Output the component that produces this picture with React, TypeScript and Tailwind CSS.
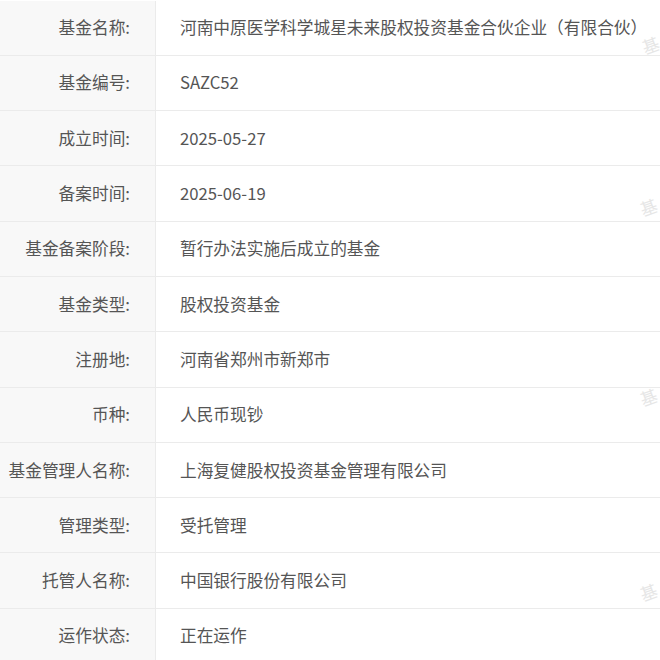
const rows: [string, string][] = [
  ['基金名称:', '河南中原医学科学城星未来股权投资基金合伙企业（有限合伙）'],
  ['基金编号:', 'SAZC52'],
  ['成立时间:', '2025-05-27'],
  ['备案时间:', '2025-06-19'],
  ['基金备案阶段:', '暂行办法实施后成立的基金'],
  ['基金类型:', '股权投资基金'],
  ['注册地:', '河南省郑州市新郑市'],
  ['币种:', '人民币现钞'],
  ['基金管理人名称:', '上海复健股权投资基金管理有限公司'],
  ['管理类型:', '受托管理'],
  ['托管人名称:', '中国银行股份有限公司'],
  ['运作状态:', '正在运作'],
];

const marks = [
  { top: 'top-[36px]', left: 'left-[642px]' },
  { top: 'top-[198px]', left: 'left-[640px]' },
  { top: 'top-[388px]', left: 'left-[640px]' },
  { top: 'top-[583px]', left: 'left-[640px]' },
];

export default function App() {
  return (
    <div className="relative w-[660px] h-[660px] overflow-hidden bg-white font-['Noto_Sans_CJK_SC','Microsoft_YaHei',sans-serif] text-[16.7px] text-[#555]">
      <div className="flex flex-col pt-[0.5px]">
        {rows.map(([label, value]) => (
          <div key={label} className="flex h-[55.3px] shrink-0 border-b border-[#ebebeb]">
            <div className="w-[156px] shrink-0 bg-[#f8f8f8] border-r border-[#ebebeb] flex items-center justify-end pr-[25px] whitespace-nowrap">
              {label}
            </div>
            <div className="flex-1 flex items-center pl-[24px] whitespace-nowrap">{value}</div>
          </div>
        ))}
      </div>
      {marks.map((m, i) => (
        <span
          key={i}
          className={`absolute ${m.top} ${m.left} text-[17px] leading-none text-[#e6e6e6] -rotate-[20deg] select-none pointer-events-none`}
        >
          基
        </span>
      ))}
    </div>
  );
}
